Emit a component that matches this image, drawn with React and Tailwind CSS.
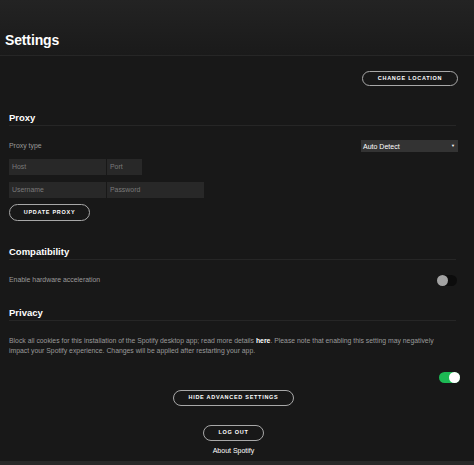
import React from "react";

function PillButton({ children, className }) {
  return (
    <div
      className={
        "flex items-center justify-center rounded-full border border-[#a8a8a8] text-[5.5px] font-bold tracking-[0.13em] text-white leading-none " +
        className
      }
    >
      {children}
    </div>
  );
}

function SectionHeading({ children, className }) {
  return (
    <div className={"h-[14px] border-b border-[#262626] mr-[2px] " + className}>
      <div className="text-[9.5px] font-bold leading-[12px] text-white">{children}</div>
    </div>
  );
}

export default function App() {
  return (
    <div className="w-[474px] h-[465px] bg-[#181818] flex flex-col overflow-hidden text-white font-['Liberation_Sans',Arial,sans-serif]">
      <div className="h-[56px] shrink-0 bg-gradient-to-b from-[#232323] to-[#1a1a1a] border-b border-[#262626] flex items-end pl-[5px] pb-[8px]">
        <div className="text-[14px] font-bold leading-[14px] tracking-[-0.01em]">Settings</div>
      </div>

      <div className="flex flex-col pl-[9px] pr-[16px]">
        <PillButton className="self-end mt-[15px] h-[15px] w-[96px]">CHANGE LOCATION</PillButton>

        <SectionHeading className="mt-[26px]">Proxy</SectionHeading>

        <div className="mt-[14px] h-[12px] flex items-center justify-between">
          <div className="text-[6.9px] text-[#9a9a9a] leading-none">Proxy type</div>
          <div className="w-[97px] h-[12px] bg-[#333333] flex items-center justify-between px-[2px]">
            <span className="text-[7px] text-white leading-none">Auto Detect</span>
            <span className="text-[4px] text-white leading-none mr-[1px]">▼</span>
          </div>
        </div>

        <div className="mt-[7px] flex gap-[1px]">
          <div className="w-[97px] h-[16px] bg-[#282828] flex items-center pl-[3px] text-[6.9px] text-[#7a7a7a] leading-none">Host</div>
          <div className="w-[35px] h-[16px] bg-[#282828] flex items-center pl-[3px] text-[6.9px] text-[#7a7a7a] leading-none">Port</div>
        </div>
        <div className="mt-[7px] flex gap-[1px]">
          <div className="w-[97px] h-[16px] bg-[#282828] flex items-center pl-[3px] text-[6.9px] text-[#7a7a7a] leading-none">Username</div>
          <div className="w-[97px] h-[16px] bg-[#282828] flex items-center pl-[3px] text-[6.9px] text-[#7a7a7a] leading-none">Password</div>
        </div>

        <PillButton className="self-start mt-[6px] h-[17px] w-[81px]">UPDATE PROXY</PillButton>

        <SectionHeading className="mt-[25px]">Compatibility</SectionHeading>

        <div className="mt-[14px] h-[12px] flex items-center justify-between">
          <div className="text-[6.9px] text-[#9a9a9a] leading-none">Enable hardware acceleration</div>
          <div className="w-[20px] h-[11px] rounded-full bg-[#0c0c0c] flex items-center mr-[1px]">
            <div className="w-[11px] h-[11px] rounded-full bg-[#a3a3a3]"></div>
          </div>
        </div>

        <SectionHeading className="mt-[21px]">Privacy</SectionHeading>

        <div className="mt-[15px] text-[6.85px] leading-[10px] text-[#9a9a9a]">
          Block all cookies for this installation of the Spotify desktop app; read more details{" "}
          <span className="font-bold text-white">here</span>. Please note that enabling this setting may negatively
          <br />
          impact your Spotify experience. Changes will be applied after restarting your app.
        </div>

        <div className="self-end mt-[16px] mr-[-2px] w-[21px] h-[11px] rounded-full bg-[#1db954] flex items-center justify-end">
          <div className="w-[11px] h-[11px] rounded-full bg-white"></div>
        </div>

        <PillButton className="self-center mt-[7px] h-[16px] w-[121px]">HIDE ADVANCED SETTINGS</PillButton>

        <PillButton className="self-center mt-[19px] h-[16px] w-[61px]">LOG OUT</PillButton>

        <div className="self-center mt-[5px] text-[7px] leading-[10px] text-white">About Spotify</div>
      </div>

      <div className="mt-auto h-[4px] bg-[#282828] shrink-0"></div>
    </div>
  );
}
